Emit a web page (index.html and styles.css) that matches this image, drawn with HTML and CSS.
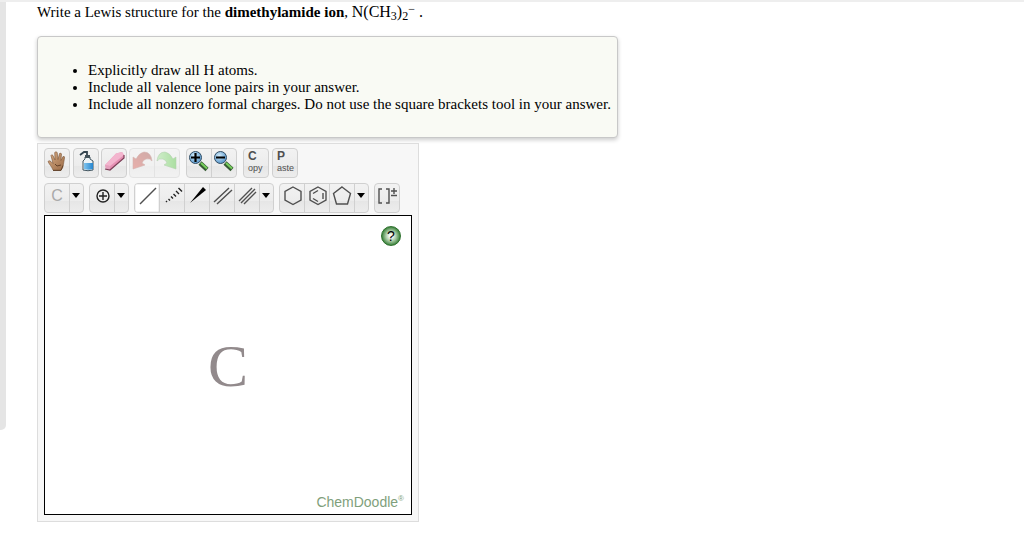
FILE: index.html
```html
<!DOCTYPE html>
<html lang="en">
<head>
<meta charset="utf-8">
<title>Lewis structure</title>
<link rel="stylesheet" href="styles.css">
</head>
<body>
<div class="side" aria-hidden="true"></div>
<main class="question">
  <p class="prompt">Write a Lewis structure for the <b>dimethylamide ion</b>, <span class="formula">N(CH<sub>3</sub>)<sub>2</sub><sup>−</sup> .</span></p>
  <ul class="notes">
    <li>Explicitly draw all H atoms.</li>
    <li>Include all valence lone pairs in your answer.</li>
    <li>Include all nonzero formal charges. Do not use the square brackets tool in your answer.</li>
  </ul>
  <section class="sketcher" aria-label="Structure editor">
    <svg width="0" height="0" class="defs" aria-hidden="true">
      <defs>
        <linearGradient id="skin" x1="0" y1="0" x2="1" y2="1"><stop offset="0" stop-color="#d9ae88"/><stop offset="1" stop-color="#9a6a45"/></linearGradient>
        <linearGradient id="pink" x1="0" y1="0" x2="1" y2="1"><stop offset="0" stop-color="#f6bcd3"/><stop offset="1" stop-color="#d9709c"/></linearGradient>
        <linearGradient id="water"><stop offset="0" stop-color="#7fc4ee"/><stop offset="1" stop-color="#2585cf"/></linearGradient>
        <radialGradient id="lens" cx=".4" cy=".35" r=".7"><stop offset="0" stop-color="#d3ecfb"/><stop offset="1" stop-color="#4f91c9"/></radialGradient>
        <linearGradient id="undo" x1="1" y1="0" x2="0" y2="1"><stop offset="0" stop-color="#a8605a"/><stop offset="1" stop-color="#dc6a62"/></linearGradient>
        <linearGradient id="redo"><stop offset="0" stop-color="#a8e49c"/><stop offset="1" stop-color="#62c850"/></linearGradient>
      </defs>
    </svg>
    <div class="row">
      <div class="group"><button class="tool" aria-label="Move"><svg width="24" height="28" viewBox="0 0 24 28"><path d="M8 21C7 18 4 15 3 12.500Q4 11 6 12.500L8 14.500 6 6.500Q6.500 5 8 6.500L10 11 9.700 3.500Q11 2 12.200 3.500L13 10.500 14.500 4.500Q16 3.500 16.500 5L16 11.500 18 7.500Q20 7 19.500 9L18.500 15Q18 19 16 21Z" fill="url(#skin)" stroke="#7c5638" stroke-width=".6"/><path d="M8 21.500h8l2-5M10 15l2 2 4-1" fill="none" stroke="#5c3b22" stroke-width=".9"/></svg></button></div>
      <div class="group medium"><button class="tool" aria-label="Clear"><svg width="24" height="28" viewBox="0 0 24 28"><path d="M6 6l4-3h3v4" fill="none" stroke="#354550" stroke-width="1.800"/><path d="M11 8h5v2l3 2v9q-5 1.500-10 0v-9l2-2z" fill="#edf3f6" stroke="#40545f"/><path d="M10 14h9v6q-4.500 1.500-9 0z" fill="url(#water)"/><path d="M11 6h5v3h-5z" fill="#43525b"/></svg></button></div>
      <div class="group small"><button class="tool" aria-label="Erase"><svg width="24" height="28" viewBox="0 0 24 28"><path d="M3 16L14 4.500 20 3l2 3v3L8 21l-4-1z" fill="url(#pink)"/><path d="M3 16L14 4.500 20 3l2 3L8 17z" fill="#f3b5ce"/><path d="M3 16l5 1v4l-4-1z" fill="#e5a1be"/><path d="M3 20l5 1L22 9V6" fill="none" stroke="#7c4058" stroke-width="1.200"/></svg></button></div>
      <div class="group small faded"><button class="tool" aria-label="Undo" disabled><svg width="24" height="28" viewBox="0 0 24 28"><path d="M3 20V8l3 2Q9 4 14 3q7 0 8 9-2-3-6-2-3 1-4 4l3 2z" fill="url(#undo)" stroke="#b3736d" stroke-width=".6"/></svg></button><button class="tool" aria-label="Redo" disabled><svg width="24" height="28" viewBox="0 0 24 28"><path d="M21 20V8l-3 2Q15 4 10 3q-7 0-8 9 2-3 6-2 3 1 4 4l-3 2z" fill="url(#redo)" stroke="#72ae69" stroke-width=".6"/></svg></button></div>
      <div class="group large"><button class="tool" aria-label="Zoom in"><svg width="24" height="28" viewBox="0 0 24 28"><path d="M13 14l7 6.500" stroke="#365b33" stroke-width="4.500"/><path d="M14 14l6 5.500" stroke="#76ce5b" stroke-width="2"/><circle cx="8.500" cy="8.500" r="6" fill="url(#lens)" stroke="#344e64" stroke-width="1"/><path d="M4 8.500h9M8.500 4v9" stroke="#000" stroke-width="2.200"/></svg></button><button class="tool" aria-label="Zoom out"><svg width="24" height="28" viewBox="0 0 24 28"><path d="M13 14l7 6.500" stroke="#365b33" stroke-width="4.500"/><path d="M14 14l6 5.500" stroke="#76ce5b" stroke-width="2"/><circle cx="8.500" cy="8.500" r="6" fill="url(#lens)" stroke="#344e64" stroke-width="1"/><path d="M4 8.500h9" stroke="#000" stroke-width="2.200"/></svg></button></div>
      <div class="group large"><button class="tool word"><b>C</b><span>opy</span></button></div>
      <div class="group medium"><button class="tool word"><b>P</b><span>aste</span></button></div>
    </div>
    <div class="row bonds">
      <div class="group"><button class="tool atom">C</button><button class="tool menu" aria-label="More atoms"><svg width="13" height="28" viewBox="0 0 13 28"><path d="M2 9h8l-4 5z"/></svg></button></div>
      <div class="group"><button class="tool" aria-label="Add charge"><svg width="24" height="28" viewBox="0 0 24 28" class="line dark"><circle cx="13" cy="12" r="6"/><path d="M9 12h8M13 8v8"/></svg></button><button class="tool menu" aria-label="More attributes"><svg width="13" height="28" viewBox="0 0 13 28"><path d="M2 9h8l-4 5z"/></svg></button></div>
      <div class="group"><button class="tool selected" aria-label="Single bond" aria-pressed="true"><svg width="24" height="28" viewBox="0 0 24 28" class="line"><path d="M5 20L21 4"/></svg></button><button class="tool" aria-label="Recessed bond"><svg width="24" height="28" viewBox="0 0 24 28" class="line dark"><path d="M6 17l1 1M8.500 15l1.500 1.500M11 12.500l2 2M13.500 10l2.500 2.500M16 7l3 3M18.500 4l3.500 3.500"/></svg></button><button class="tool" aria-label="Protruding bond"><svg width="24" height="28" viewBox="0 0 24 28"><path d="M5 19L18 3l3 3z"/></svg></button><button class="tool" aria-label="Double bond"><svg width="24" height="28" viewBox="0 0 24 28" class="line"><path d="M4 18L19 4M7 20L22 6"/></svg></button><button class="tool" aria-label="Triple bond"><svg width="24" height="28" viewBox="0 0 24 28" class="line"><path d="M4 17L17 4M6 19L20 5M9 20L21 8"/></svg></button><button class="tool menu" aria-label="More bonds"><svg width="13" height="28" viewBox="0 0 13 28"><path d="M2 9h8l-4 5z"/></svg></button></div>
      <div class="group"><button class="tool" aria-label="Cyclohexane"><svg width="24" height="28" viewBox="0 0 24 28" class="line"><path d="M13 3l8 4.500v8.500l-8 4.500-8-4.500v-8.500z"/></svg></button><button class="tool" aria-label="Benzene"><svg width="24" height="28" viewBox="0 0 24 28" class="line"><path d="M13 3l8 4.500v8.500l-8 4.500-8-4.500v-8.500zM8 9.500l5-3M18 9v6M8 14.500l5 3"/></svg></button><button class="tool" aria-label="Cyclopentane"><svg width="24" height="28" viewBox="0 0 24 28" class="line"><path d="M12 3l8.500 6.500-3 10.500H6.500L3.500 9.500z"/></svg></button><button class="tool menu" aria-label="More rings"><svg width="13" height="28" viewBox="0 0 13 28"><path d="M2 9h8l-4 5z"/></svg></button></div>
      <div class="group"><button class="tool" aria-label="Brackets and charge"><svg width="24" height="28" viewBox="0 0 24 28" class="line"><path d="M7 5H4v14h3M11 5h3v14h-3M16 7h6M19 4v6M16 11.500h6"/></svg></button></div>
    </div>
    <div class="canvas">
      <button class="help" aria-label="Help">?</button>
      <span class="carbon">C</span>
      <span class="brand">ChemDoodle<sup>®</sup></span>
    </div>
  </section>
</main>
</body>
</html>
```
FILE: styles.css
```css
* { box-sizing: border-box; }
body {
  margin: 0;
  border-top: 2px solid #eee;
  background: #fff;
  color: #000;
  font-family: "Liberation Serif", "Times New Roman", serif;
  font-size: 15px;
  line-height: 17px;
  display: flex;
  align-items: flex-start;
}
.side {
  width: 6px;
  height: 428px;
  flex: none;
  background: #e5e5e5;
  border-bottom-right-radius: 5px;
}
.question {
  display: flex;
  flex-direction: column;
  align-items: flex-start;
  padding: 1px 31px 12px;
}
.prompt { margin: 0 0 15px; line-height: 18px; }
.formula { font-size: 16px; }
.formula sub, .formula sup { font-size: 12px; line-height: 0; }
.formula sub { vertical-align: -3px; }
.formula sup { vertical-align: 4px; }
.notes {
  margin: 0 0 5px;
  padding: 25px 6px 24px 50px;
  background: #f9faf4;
  border: 1px solid #c8c8c8;
  border-radius: 4px;
  box-shadow: 0 2px 4px #ccc;
}
.sketcher {
  display: flex;
  flex-direction: column;
  padding: 4px 6px 6px;
  background: #f7f7f7;
  border: 1px solid #ddd;
}
.defs { position: absolute; }
.row { display: flex; height: 30px; margin-bottom: 5px; }
.bonds { gap: 5px; margin-bottom: 2px; }
.small { margin-left: 2px; }
.medium { margin-left: 3px; }
.large { margin-left: 6px; }
.group {
  display: flex;
  border: 1px solid #d0d0d0;
  border-radius: 4px;
  background: linear-gradient(#f2f2f2, #ececec 60%, #e6e6e6 61%, #ededed);
  overflow: hidden;
}
.faded { opacity: 0.5; }
.tool {
  width: 24px;
  height: 28px;
  padding: 0;
  border: 0;
  background: none;
  color: #505050;
  font-family: "Liberation Sans", Arial, sans-serif;
}
.tool + .tool { width: 25px; border-left: 1px solid #d0d0d0; }
.tool + .menu { width: 14px; }
.tool svg { display: block; }
.line { fill: none; stroke: #505050; stroke-width: 1.4; }
.dark { stroke: #222; }
.selected { background: #fff; box-shadow: inset 0 0 1px #777; }
.atom { color: #aaa; font-size: 16px; padding-bottom: 4px; }
.word {
  display: flex;
  flex-direction: column;
  justify-content: center;
  padding: 0 0 4px 4px;
  text-align: left;
  font-size: 9px;
  line-height: 10px;
}
.word b { font-size: 12px; line-height: 14px; }
.canvas {
  display: grid;
  grid-template-rows: 20px 1fr 20px;
  width: 368px;
  height: 300px;
  padding: 10px 7px 1px;
  border: 1px solid #000;
  background: #fff;
}
.help {
  justify-self: end;
  width: 20px;
  height: 20px;
  margin-right: 3px;
  padding: 0;
  border: 1px solid #2c702c;
  border-radius: 50%;
  background: radial-gradient(#fff 10%, #a9cba6 40%, #317b31 75%);
  font: 14px/18px "Liberation Sans", Arial, sans-serif;
  color: #000;
}
.carbon {
  place-self: center;
  padding-bottom: 8px;
  color: #928a8c;
  font-size: 60px;
  line-height: 60px;
}
.brand {
  justify-self: end;
  color: #7f9f7c;
  font: 14px/18px "Liberation Sans", Arial, sans-serif;
}
.brand sup { font-size: 8px; line-height: 0; vertical-align: 6px; }
```
